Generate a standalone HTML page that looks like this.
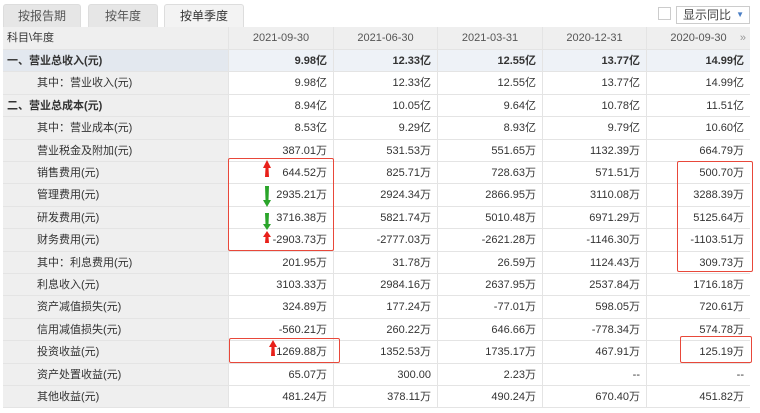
<!DOCTYPE html><html><head><meta charset="utf-8"><style>
*{margin:0;padding:0;box-sizing:border-box}
body{width:760px;height:413px;overflow:hidden;background:#fff;font-family:"Liberation Sans","Noto Sans CJK SC",sans-serif;font-size:11px;color:#333;position:relative}
.tab{position:absolute;top:4px;height:23px;background:#e6e6e6;border:1px solid #ddd;border-bottom:none;border-radius:3px 3px 0 0;text-align:center;line-height:22px;font-size:12px;color:#555}
.row{position:absolute;left:3px;width:747px;height:22.4px;border-bottom:1px solid #e4e4e4;line-height:22px}
.row div{position:absolute;top:0;height:100%;}
.l{left:0;width:225px;background:#efefef;padding-left:4px}
.l.s{padding-left:34px}
.c{text-align:right;padding-right:6px;border-left:1px solid #e4e4e4}
.b{font-weight:bold}
.hl div{background:#e3e8ef}
.hl .c{background:#eef2f7}
.box{position:absolute;border:1px solid #e8483a;border-radius:2px}
</style></head><body>
<div class="tab" style="left:3px;width:78px">按报告期</div>
<div class="tab" style="left:88px;width:70px">按年度</div>
<div class="tab" style="left:164px;width:80px;background:#f3f3f3;color:#333">按单季度</div>
<div style="position:absolute;left:658px;top:7px;width:13px;height:13px;border:1px solid #ccc;background:#fff"></div>
<div style="position:absolute;left:676px;top:6px;width:74px;height:18px;border:1px solid #ccc;font-size:12px;line-height:16px;padding-left:6px;color:#444">显示同比<span style="position:absolute;right:5px;top:0;color:#4a7ec4;font-size:8px">▼</span></div>
<div id="t"></div>
<script>
var cols=[225,330,434,539,643,747];
var rows=[
["科目\\年度","2021-09-30","2021-06-30","2021-03-31","2020-12-31","2020-09-30","h"],
["一、营业总收入(元)","9.98亿","12.33亿","12.55亿","13.77亿","14.99亿","hl"],
["其中：营业收入(元)","9.98亿","12.33亿","12.55亿","13.77亿","14.99亿","s"],
["二、营业总成本(元)","8.94亿","10.05亿","9.64亿","10.78亿","11.51亿",""],
["其中：营业成本(元)","8.53亿","9.29亿","8.93亿","9.79亿","10.60亿","s"],
["营业税金及附加(元)","387.01万","531.53万","551.65万","1132.39万","664.79万","s"],
["销售费用(元)","644.52万","825.71万","728.63万","571.51万","500.70万","s"],
["管理费用(元)","2935.21万","2924.34万","2866.95万","3110.08万","3288.39万","s"],
["研发费用(元)","3716.38万","5821.74万","5010.48万","6971.29万","5125.64万","s"],
["财务费用(元)","-2903.73万","-2777.03万","-2621.28万","-1146.30万","-1103.51万","s"],
["其中：利息费用(元)","201.95万","31.78万","26.59万","1124.43万","309.73万","s"],
["利息收入(元)","3103.33万","2984.16万","2637.95万","2537.84万","1716.18万","s"],
["资产减值损失(元)","324.89万","177.24万","-77.01万","598.05万","720.61万","s"],
["信用减值损失(元)","-560.21万","260.22万","646.66万","-778.34万","574.78万","s"],
["投资收益(元)","1269.88万","1352.53万","1735.17万","467.91万","125.19万","s"],
["资产处置收益(元)","65.07万","300.00","2.23万","--","--","s"],
["其他收益(元)","481.24万","378.11万","490.24万","670.40万","451.82万","s"]];
var h="";
rows.forEach(function(r,i){
 var top=i==0?27:50+(i-1)*22.4;
 var ht=i==0?23:22.4;
 var cls=r[6];
 h+='<div class="row '+(cls=="hl"?"hl":"")+'" style="top:'+top+'px;height:'+ht+'px">';
 h+='<div class="l'+(cls=="s"?" s":"")+(cls=="hl"||(cls==""&&i>0)?" b":"")+'">'+r[0]+'</div>';
 for(var k=1;k<6;k++){
  var L=cols[k-1],W=cols[k]-cols[k-1];
  var st='left:'+L+'px;width:'+W+'px;';
  if(i==0){st+='text-align:center;padding-right:0;background:#efefef;color:#555;';}
  h+='<div class="c'+(cls=="hl"?" b":"")+'" style="'+st+'">'+r[k]+(i==0&&k==5?' <span style="color:#999;position:absolute;right:4px">»</span>':'')+'</div>';
 }
 h+='</div>';
});
document.getElementById('t').innerHTML=h;
</script>
<div class="box" style="left:228px;top:158px;width:106px;height:93px"></div>
<div class="box" style="left:677px;top:161px;width:76px;height:111px"></div>
<div class="box" style="left:229px;top:338px;width:111px;height:25px"></div>
<div class="box" style="left:680px;top:336px;width:72px;height:27px"></div>
<svg style="position:absolute;left:0;top:0" width="760" height="413">
<g fill="#e8201a"><path d="M267 160 l-4 8 h2.5 l-0.5 9 h4 l-0.5 -9 h2.5z"/><path d="M267 231 l-4 6 h2.5 l-0.5 6 h4 l-0.5 -6 h2.5z"/><path d="M273 340 l-4 7 h2.5 l-0.5 9 h4 l-0.5 -9 h2.5z"/></g>
<g fill="#2aa52a"><path d="M267 207 l-4 -7 h2.5 l-0.5 -14 h4 l-0.5 14 h2.5z"/><path d="M267 230 l-4 -6 h2.5 l-0.5 -11 h4 l-0.5 11 h2.5z"/></g>
</svg>
</body></html>
